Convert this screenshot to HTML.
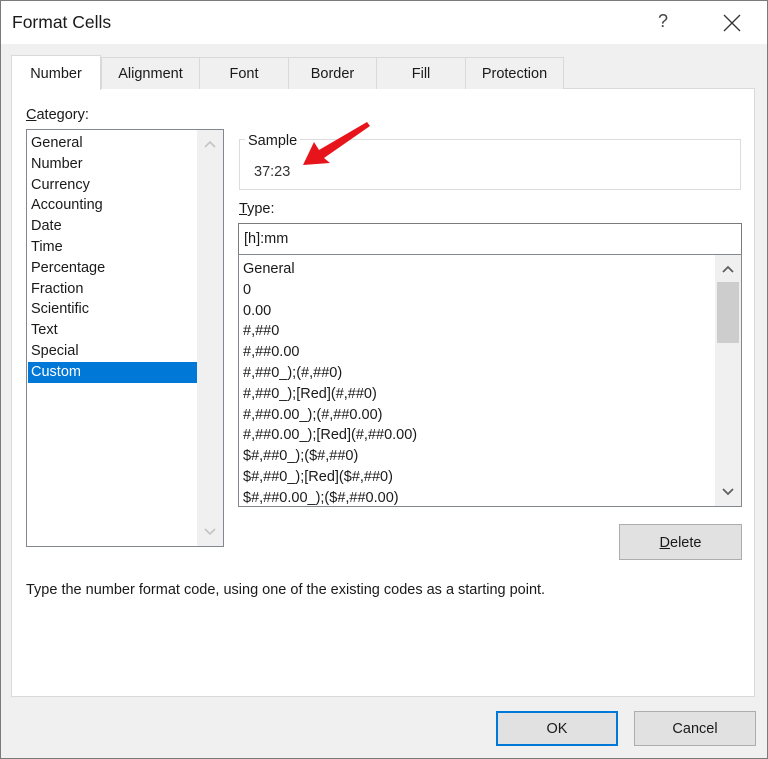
<!DOCTYPE html>
<html><head><meta charset="utf-8"><style>
*{box-sizing:border-box;margin:0;padding:0}
body{width:768px;height:759px;position:relative;background:#f0f0f0;font-family:"Liberation Sans",sans-serif;font-size:14.5px;color:#1a1a1a;overflow:hidden}
.a{position:absolute}
.title{left:0;top:0;width:768px;height:44px;background:#fff}
.tab{position:absolute;top:57px;height:32px;border:1px solid #d9d9d9;border-bottom:none;background:#f0f0f0;text-align:center;line-height:32px}
.panel{left:11px;top:88px;width:744px;height:609px;background:#fff;border:1px solid #d9d9d9}
.list div{height:20.8px;line-height:20.8px;padding-left:4px;white-space:nowrap}
.btn{position:absolute;background:#e1e1e1;border:1px solid #adadad;text-align:center}
</style></head><body>
<div class="a" style="left:0;top:0;width:768px;height:759px;border:1px solid #7a7a7a;z-index:5;pointer-events:none"></div>
<div class="a title"></div>
<div class="a" style="left:12px;top:12px;font-size:17.5px">Format Cells</div>
<div class="a" style="left:658px;top:11px;font-size:18px;color:#444">?</div>
<svg class="a" style="left:723px;top:14px" width="18" height="18"><path d="M1 1L17 17M17 1L1 17" stroke="#333" stroke-width="1.3"/></svg>
<div class="a panel"></div>
<div class="tab" style="left:101px;width:99px">Alignment</div>
<div class="tab" style="left:199px;width:90px">Font</div>
<div class="tab" style="left:288px;width:89px">Border</div>
<div class="tab" style="left:376px;width:90px">Fill</div>
<div class="tab" style="left:465px;width:99px">Protection</div>
<div class="tab" style="left:11px;top:55px;width:90px;height:35px;background:#fff;line-height:36px">Number</div>
<div class="a" style="left:26px;top:107px"><u>C</u>ategory:</div>
<div class="a list" style="left:26px;top:129px;width:198px;height:418px;border:1px solid #828790;background:#fff;padding-top:3px">
<div>General</div><div>Number</div><div>Currency</div><div>Accounting</div><div>Date</div><div>Time</div><div>Percentage</div><div>Fraction</div><div>Scientific</div><div>Text</div><div>Special</div><div style="background:#0078d7;color:#fff;width:169px;margin-left:1px;padding-left:3px">Custom</div>
</div>
<div class="a" style="left:197px;top:130px;width:26px;height:416px;background:#f0f0f0"></div>
<svg class="a" style="left:203px;top:139px" width="14" height="10"><path d="M2 8L7 3L12 8" stroke="#c4c4c4" stroke-width="1.6" fill="none"/></svg>
<svg class="a" style="left:203px;top:527px" width="14" height="10"><path d="M2 2L7 7L12 2" stroke="#c4c4c4" stroke-width="1.6" fill="none"/></svg>
<div class="a" style="left:239px;top:139px;width:502px;height:51px;border:1px solid #dcdcdc"></div>
<div class="a" style="left:245px;top:133px;background:#fff;padding:0 3px">Sample</div>
<div class="a" style="left:254px;top:164px;color:#333">37:23</div>
<svg class="a" style="left:295px;top:115px" width="85" height="60"><polygon points="8,50 19,27 24,35 72,7 75,11 29,43 35,48" fill="#e8141c"/></svg>
<div class="a" style="left:239px;top:201px"><u>T</u>ype:</div>
<div class="a" style="left:238px;top:223px;width:504px;height:32px;border:1px solid #7a7a7a;background:#fff;padding:7px 0 0 5px">[h]:mm</div>
<div class="a list" style="left:238px;top:254px;width:504px;height:253px;border:1px solid #828790;background:#fff;padding-top:4px;overflow:hidden">
<div>General</div><div>0</div><div>0.00</div><div>#,##0</div><div>#,##0.00</div><div>#,##0_);(#,##0)</div><div>#,##0_);[Red](#,##0)</div><div>#,##0.00_);(#,##0.00)</div><div>#,##0.00_);[Red](#,##0.00)</div><div>$#,##0_);($#,##0)</div><div>$#,##0_);[Red]($#,##0)</div><div>$#,##0.00_);($#,##0.00)</div>
</div>
<div class="a" style="left:715px;top:255px;width:26px;height:251px;background:#f0f0f0"></div>
<div class="a" style="left:717px;top:282px;width:22px;height:61px;background:#cdcdcd"></div>
<svg class="a" style="left:721px;top:264px" width="14" height="10"><path d="M2 8L7 3L12 8" stroke="#606060" stroke-width="1.8" fill="none"/></svg>
<svg class="a" style="left:721px;top:487px" width="14" height="10"><path d="M2 2L7 7L12 2" stroke="#606060" stroke-width="1.8" fill="none"/></svg>
<div class="btn" style="left:619px;top:524px;width:123px;height:36px;line-height:36px"><u>D</u>elete</div>
<div class="a" style="left:26px;top:582px">Type the number format code, using one of the existing codes as a starting point.</div>
<div class="btn" style="left:496px;top:711px;width:122px;height:35px;border:2px solid #0078d7;line-height:32px">OK</div>
<div class="btn" style="left:634px;top:711px;width:122px;height:35px;line-height:34px">Cancel</div>
</body></html>
